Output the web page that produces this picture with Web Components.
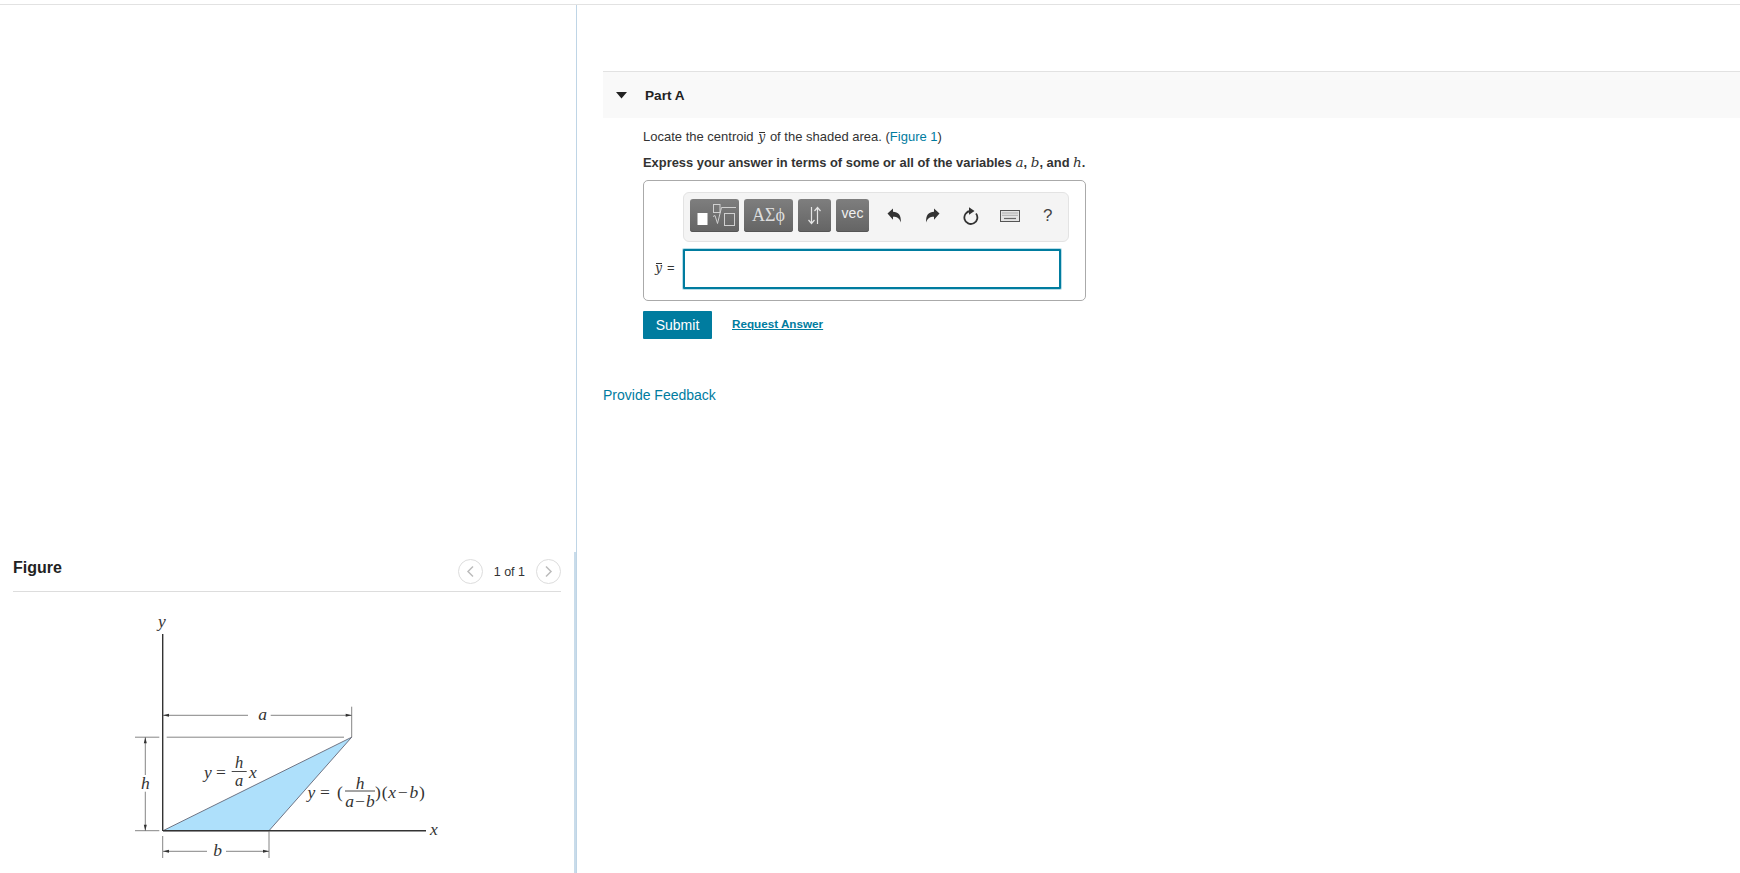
<!DOCTYPE html>
<html><head><meta charset="utf-8"><style>
html,body{margin:0;padding:0;background:#fff;height:100%;overflow:hidden}
body{font-family:"Liberation Sans",Arial,sans-serif;font-size:14px;color:#333}
</style></head><body>
<mp-app>
  <mp-figure-pane slot="left"></mp-figure-pane>
  <mp-work-pane slot="right">
    <mp-part-header>Part A</mp-part-header>
    <mp-part-body></mp-part-body>
  </mp-work-pane>
</mp-app>
<script>
function def(name, css, html){
  customElements.define(name, class extends HTMLElement{
    constructor(){super();const r=this.attachShadow({mode:"open"});r.innerHTML="<style>"+css+"</style>"+html;}
  });
}
def("mp-app",`
:host{display:grid;grid-template-columns:576px 1fr;height:873px;margin-top:4px;border-top:1px solid #e2e2e2;overflow:hidden;box-sizing:border-box}
.l{display:block;overflow:hidden;height:868px}
.r{display:block;border-left:1px solid #bfd5e6;height:868px}
`,`<div class="l"><slot name="left"></slot></div><div class="r"><slot name="right"></slot></div>`);

def("mp-ybar",`
:host{display:inline-block;font:italic 12.500px "DejaVu Serif","Liberation Serif",serif;position:relative;padding:0 1px;line-height:14px}
i{position:absolute;left:2px;right:1px;top:2px;height:1px;background:currentColor}
`,`<i></i>y`);

def("mp-part-header",`
:host{display:flex;align-items:center;height:46px;margin-top:66px;border-top:1px solid #e2e2e2;background:#f9f9f9;font-weight:bold;font-size:13.600px;color:#222;padding-left:12px}
svg{width:13px;height:8px;margin-right:17px;display:block}
`,`<svg viewBox="0 0 13 8"><path d="M1 1h11L6.500 7.500z" fill="#222"/></svg><slot></slot>`);

def("mp-part-body",`
:host{display:block;padding:9px 0 0 40px;color:#333;font-size:13px}
.q{margin:0;line-height:20px}
.q a{color:#007c9f}
`,`<p class="q">Locate the centroid <mp-ybar></mp-ybar> of the shaded area. (<a>Figure 1</a>)</p><mp-answer-box></mp-answer-box>`);

def("mp-answer-box",`
:host{display:block}
.e{font-weight:bold;font-size:12.900px;margin:6px 0 0;line-height:20px;color:#333}
v{font:italic 13.500px "DejaVu Serif","Liberation Serif",serif;font-weight:500}
.box{box-sizing:border-box;width:443px;height:121px;margin-top:7px;border:1px solid #aaa;border-radius:5px;padding:11px 0 0 39px;position:relative}
.row{display:flex;align-items:center;margin-top:7px}
.lab{position:absolute;left:10px;top:79px;font-size:13px;display:flex;gap:4px;align-items:center;color:#333}
.in{box-sizing:border-box;width:378px;height:40px;border:2px solid #007c9f;box-shadow:0 0 0 1px #b8dde8;background:#fff;border-radius:1px}
.act{display:flex;align-items:center;margin-top:10px;gap:20px}
button{width:69px;height:28px;border:0;border-radius:1px;background:#007c9f;color:#fff;font:14px "Liberation Sans",sans-serif;padding:0}
a{color:#007c9f;font-weight:bold;font-size:11.700px;text-decoration:underline;margin-top:-3px}
.fb{margin:48px 0 0 -40px;color:#007c9f;font-size:14px}
`,`<div class="e">Express your answer in terms of some or all of the variables <v>a</v>, <v>b</v>, and <v>h</v>.</div>
<div class="box"><mp-toolbar></mp-toolbar><div class="row"><div class="in"></div></div><div class="lab"><mp-ybar></mp-ybar><span>=</span></div></div>
<div class="act"><button>Submit</button><a>Request Answer</a></div>
<div class="fb">Provide Feedback</div>`);

def("mp-toolbar",`
:host{display:flex;box-sizing:border-box;width:386px;height:50px;background:#f4f4f4;border:1px solid #e3e3e3;border-radius:6px;padding:6px 0 0 6px}
.b{box-sizing:border-box;height:33px;border-radius:3px;background:linear-gradient(#7e7e7e,#646464);box-shadow:inset 0 -1px 0 #555;margin-right:5px;display:flex;align-items:center;justify-content:center;color:#e4e4e4}
.t{font:18px "Liberation Serif",serif;color:#ddd}
.v{font:14px "Liberation Sans",sans-serif;color:#f0f0f0;padding-bottom:5px}
svg{display:block}
.ic{width:38.300px;height:33px;display:flex;align-items:center;justify-content:center;color:#333}
.g{margin-left:1.500px;display:flex}
.q{font-size:17px;color:#444}
`,`<div class="b" style="width:49px"><svg width="49" height="33" viewBox="0 0 49 33"><rect x="7.500" y="14" width="10" height="12" fill="#fff"/><g fill="none" stroke="#d0d0d0" stroke-width="1"><rect x="23.500" y="5.500" width="6.500" height="8"/><path d="M23 17.500l2-1 2.500 8L31.500 8.500H46"/><rect x="34.500" y="14.500" width="10" height="12"/></g></svg></div>
<div class="b t" style="width:49px">ΑΣϕ</div>
<div class="b" style="width:33px"><svg width="33" height="33" viewBox="0 0 33 33" fill="none" stroke="#e4e4e4" stroke-width="1.200"><path d="M13.500 8v16M10.500 21l3 3.500 3-3.500M19.500 25V9M16.500 12l3-3.500 3 3.500"/></svg></div>
<div class="b v" style="width:33px">vec</div>
<div class="g">
<div class="ic"><svg width="15" height="15" viewBox="0 0 15 15"><path d="M.5 5.500L6 .5v3.200c5 0 8.500 3.300 7.800 10.800C12.800 10.700 10.500 8.700 6 8.700v3z" fill="#333"/></svg></div>
<div class="ic"><svg width="15" height="15" viewBox="0 0 15 15"><path d="M14.500 5.500L9 .5v3.200C4 3.700.5 7 1.200 14.500 2.200 10.700 4.500 8.700 9 8.700v3z" fill="#333"/></svg></div>
<div class="ic"><svg width="18" height="18" viewBox="0 0 18 18"><path d="M8.500 4A6.500 6.500 0 1 0 14 6.500" fill="none" stroke="#333" stroke-width="1.800"/><path d="M7 .2l5.500 3.800-5.500 3.800z" fill="#333"/></svg></div>
<div class="ic"><svg width="20" height="12" viewBox="0 0 20 12"><rect x=".5" y=".5" width="19" height="11" fill="#e4e4e4" stroke="#555"/><path d="M2.500 3h15M2.500 5.300h15" stroke="#777" stroke-dasharray="1 1"/><path d="M4 8.500h12" stroke="#666" stroke-width="1.200"/></svg></div>
<div class="ic q">?</div>
</div>`);

def("mp-figure-pane",`
:host{display:block;box-sizing:border-box;margin-top:547px;height:321px;padding:0 13px 0 13px;border-right:2px solid #c9dcea}
.h{display:flex;align-items:center;height:39px;border-bottom:1px solid #ddd}
.f{font-weight:bold;font-size:16px;color:#222;flex:1;margin-top:-7px}
.n{display:flex;align-items:center;gap:11px;font-size:12.500px;color:#333}
.c{box-sizing:border-box;width:25px;height:25px;border-radius:50%;border:1px solid #ddd;display:flex;align-items:center;justify-content:center}
svg.d{display:block;margin-left:-13px}
`,`<div class="h"><div class="f">Figure</div><div class="n"><div class="c"><svg width="9" height="13" viewBox="0 0 9 13"><path d="M7 1.500L2 6.500l5 5" fill="none" stroke="#bbb" stroke-width="1.500"/></svg></div><span>1 of 1</span><div class="c"><svg width="9" height="13" viewBox="0 0 9 13"><path d="M2 1.500l5 5-5 5" fill="none" stroke="#bbb" stroke-width="1.500"/></svg></div></div></div>
<svg class="d" width="560" height="281" viewBox="0 592 560 281" font-family="Liberation Serif,serif" font-style="italic" font-size="17.500" fill="#333">
<polygon points="163,830.700 269,830.700 351.700,737.200" fill="#aee0fb" stroke="#556" stroke-width=".8"/>
<g stroke="#333" fill="none">
<path d="M162.700 634V831M163 830.700H426" stroke-width="1.400"/>
<g stroke-width=".8" stroke="#666">
<path d="M163 715.300H248M270.700 715.300H351.700M351.700 706.700V737.200M166.700 737.200H344M135 737.200H159.300M135 830.700H159.300M145.300 737.200V775M145.300 791.700V830.700M162.700 836V858M269 831V858M163 851.300H207M226 851.300H269"/></g></g>
<g fill="#333" stroke="none">
<path d="M163 715.300l6-1.500v3zM351.700 715.300l-6-1.500v3zM145.300 737.200l-1.500 6h3zM145.300 830.700l-1.500-6h3zM163 851.300l6-1.500v3zM269 851.300l-6-1.500v3z"/></g>
<text x="162" y="627" text-anchor="middle">y</text>
<text x="262.700" y="720" text-anchor="middle">a</text>
<text x="145.300" y="789" text-anchor="middle">h</text>
<text x="217.700" y="856" text-anchor="middle">b</text>
<text x="434" y="835" text-anchor="middle">x</text>
<text x="204" y="778">y</text><text x="216" y="778" font-style="normal">=</text>
<text x="239" y="768" text-anchor="middle" font-size="16.500">h</text><text x="239" y="786" text-anchor="middle" font-size="16.500">a</text>
<path d="M231.700 771.500H246.700" stroke="#333" stroke-width=".9"/>
<text x="249" y="778">x</text>
<text x="307.500" y="798">y</text><text x="320" y="798" font-style="normal">=</text>
<text x="337" y="798" font-style="normal">(</text>
<text x="360" y="789" text-anchor="middle">h</text>
<text x="360" y="806.500" text-anchor="middle">a−b</text>
<path d="M345 791H375" stroke="#333" stroke-width=".9"/>
<text x="375" y="798" letter-spacing=".8"><tspan font-style="normal">)(</tspan>x−b<tspan font-style="normal">)</tspan></text>
</svg>`);

def("mp-work-pane",`
:host{display:block;padding-left:26px}
`,`<slot></slot>`);
</script>
</body></html>
